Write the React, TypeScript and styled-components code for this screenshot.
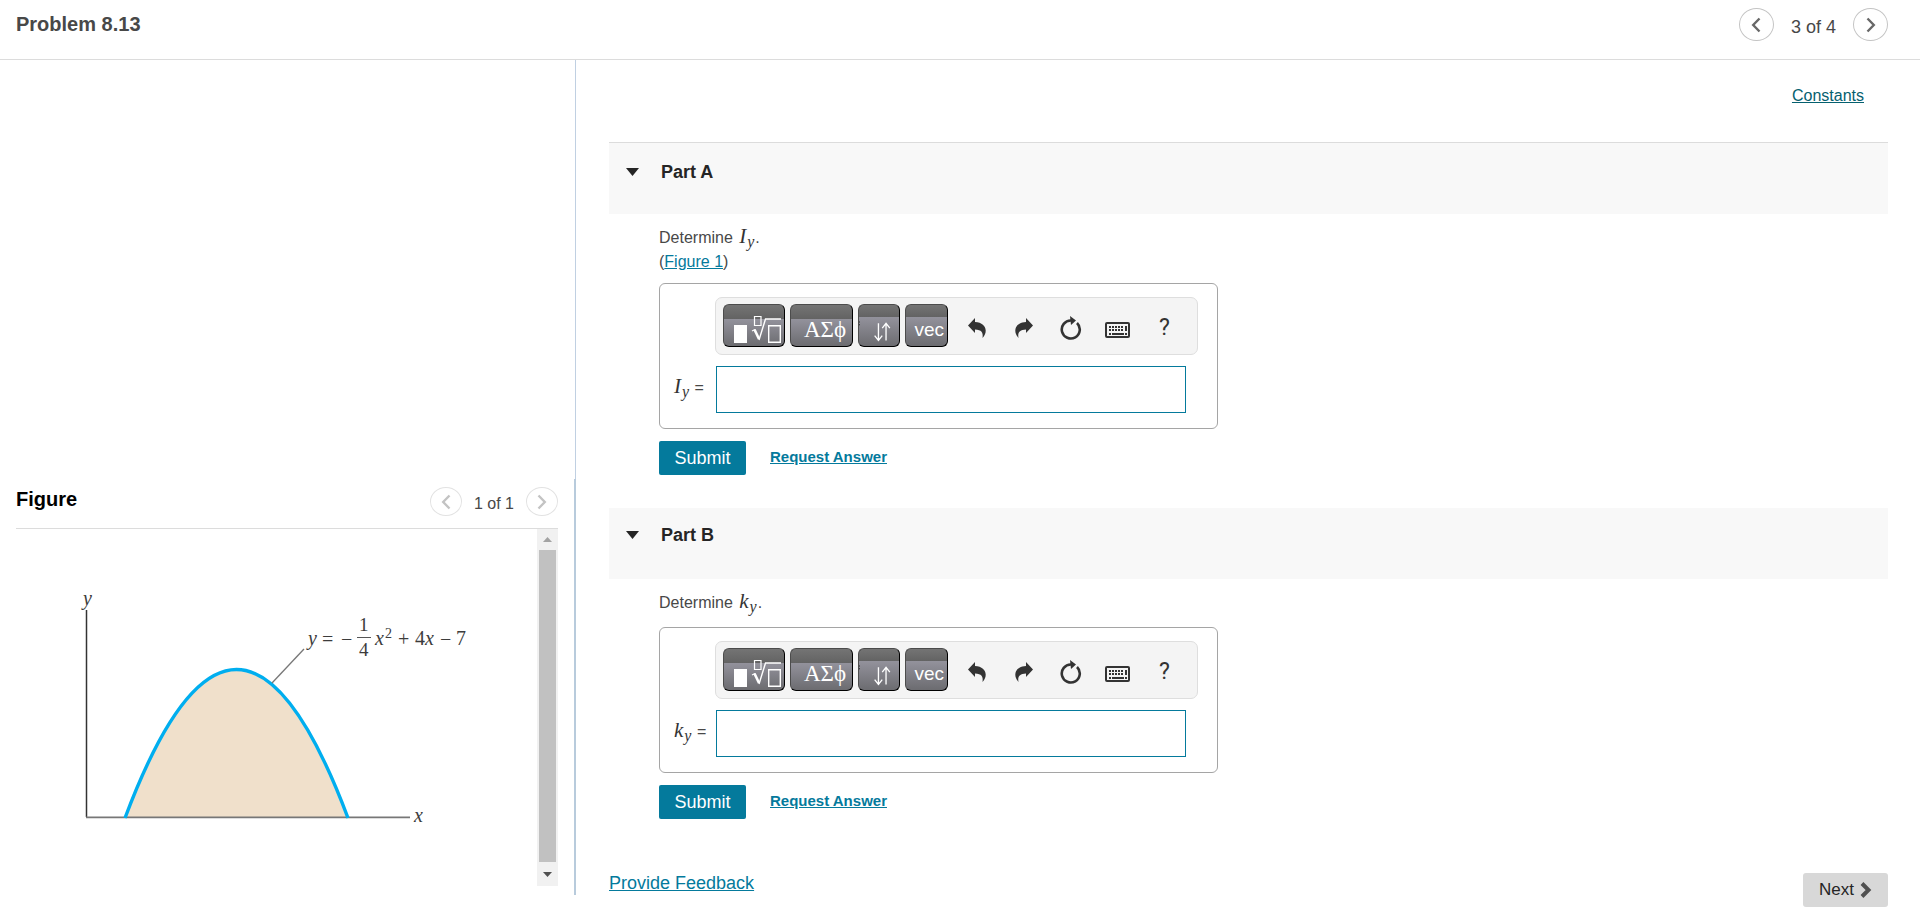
import React from 'react';
import styled, { createGlobalStyle } from 'styled-components';

const teal = '#047a9c';

const GlobalStyle = createGlobalStyle`
  *, *::before, *::after { box-sizing: border-box; }
  body {
    margin: 0;
    background: #fff;
    color: #484848;
    font: 16px/24px "Liberation Sans", Arial, sans-serif;
  }
  button, input { font: inherit; }
`;

const Page = styled.div`
  display: flex;
  flex-direction: column;
  min-height: 100vh;
`;

const Header = styled.header`
  display: flex;
  align-items: flex-start;
  justify-content: space-between;
  height: 60px;
  padding: 8px 32px 0 16px;
  border-bottom: 1px solid #dcdcdc;
`;

const Title = styled.h1`
  margin: 0;
  padding-top: 4px;
  font-size: 20px;
  line-height: 24px;
  color: #484848;
`;

const Pager = styled.nav<{ $gap: number }>`
  display: flex;
  align-items: center;
  gap: ${(p) => p.$gap}px;
`;

const PagerText = styled.span<{ $size: number }>`
  padding-top: 4px;
  font-size: ${(p) => p.$size}px;
  line-height: 24px;
`;

const RoundButton = styled.button<{ $small?: boolean }>`
  display: grid;
  place-items: center;
  width: ${(p) => (p.$small ? 32 : 35)}px;
  height: ${(p) => (p.$small ? 29 : 33)}px;
  padding: 0;
  border: 1px solid ${(p) => (p.$small ? '#e2e2e2' : '#c4c4c4')};
  border-radius: 50%;
  background: #fff;
  color: ${(p) => (p.$small ? '#c3c3c3' : '#686868')};
`;

const Body = styled.div`
  display: flex;
  flex: 1;
`;

const Side = styled.aside`
  display: flex;
  flex-direction: column;
  align-items: stretch;
  width: 30%;
  margin-bottom: 15px;
`;

const SideTop = styled.div`
  flex: 1;
  border-right: 1px solid #c0d0e2;
`;

const FigurePanel = styled.section`
  padding: 8px 16px 9px;
  border-right: 2px solid #b8cbdc;
`;

const FigureHead = styled.div`
  display: flex;
  align-items: flex-start;
  justify-content: space-between;
  height: 42px;
  border-bottom: 1px solid #dcdcdc;
`;

const FigureTitle = styled.h2`
  margin: 0;
  font-size: 20px;
  line-height: 24px;
  color: #000;
`;

const FigureBody = styled.div`
  display: flex;
  justify-content: space-between;
  height: 357px;
`;

const Scrollbar = styled.div`
  display: flex;
  flex-direction: column;
  align-items: center;
  width: 21px;
  background: #f1f1f1;
`;

const ScrollArrow = styled.div<{ $size: number }>`
  display: grid;
  place-items: center;
  height: ${(p) => p.$size}px;
`;

const ScrollThumb = styled.div`
  flex: 1;
  width: 17px;
  background: #c1c1c1;
`;

const Main = styled.main`
  display: flex;
  flex: 1;
  flex-direction: column;
  padding: 24px 32px 3px 33px;
`;

const Link = styled.a<{ $color?: string }>`
  color: ${(p) => p.$color ?? teal};
  text-decoration: underline;
`;

const TopLinks = styled.div`
  display: flex;
  justify-content: flex-end;
  height: 58px;
  padding-right: 24px;
`;

const PartHead = styled.h2<{ $first?: boolean }>`
  display: flex;
  align-items: flex-start;
  gap: 22px;
  height: ${(p) => (p.$first ? 72 : 71)}px;
  margin: 0;
  padding: ${(p) => (p.$first ? 17 : 15)}px 17px 0;
  border-top: ${(p) => (p.$first ? '1px solid #dcdcdc' : '0')};
  background: #f8f8f8;
  font-size: 18px;
  line-height: 24px;
  color: #252525;
  svg { margin-top: 8px; }
`;

const PartBody = styled.div`
  display: flex;
  flex-direction: column;
  align-items: flex-start;
  padding: 12px 0 33px 50px;
`;

const Prompt = styled.p<{ $tight?: boolean }>`
  margin: 0 0 ${(p) => (p.$tight ? 9 : 12)}px;
`;

const MathText = styled.i<{ $inline?: boolean }>`
  margin-left: ${(p) => (p.$inline ? 2 : 0)}px;
  font-family: "Liberation Serif", "Times New Roman", serif;
  font-size: 21px;
  line-height: 20px;
  color: #333;
  sub {
    margin: 0 1px;
    font-size: 16px;
    line-height: 1px;
    vertical-align: -4px;
  }
`;

const AnswerBox = styled.div`
  display: grid;
  grid-template-columns: 55px auto;
  row-gap: 11px;
  padding: 13px 19px 15px 0;
  border: 1px solid #a5a5a5;
  border-radius: 6px;
`;

const Toolbar = styled.div`
  display: flex;
  grid-column: 2;
  gap: 5px;
  width: 483px;
  height: 58px;
  padding: 6px 7px;
  border: 1px solid #dedede;
  border-radius: 7px;
  background: #f4f4f4;
`;

const KeyButton = styled.button<{ $width: number; $band: number; $serif?: boolean }>`
  display: flex;
  align-items: flex-end;
  justify-content: flex-end;
  width: ${(p) => p.$width}px;
  height: 43px;
  padding: 0 ${(p) => (p.$serif ? 6 : 3)}px 2px 0;
  border: 1px solid #000;
  border-top-color: #4c4c4c;
  border-left-color: #4c4c4c;
  border-radius: 6px;
  background: linear-gradient(
    #747474 0,
    #636363 ${(p) => p.$band}px,
    #93929c ${(p) => p.$band}px,
    #6c6c70 100%
  );
  color: #fff;
  font-family: ${(p) => (p.$serif ? '"Liberation Serif", serif' : '"Liberation Sans", sans-serif')};
  font-size: ${(p) => (p.$serif ? 23 : 19)}px;
  line-height: 28px;
`;

const IconGroup = styled.div`
  display: flex;
`;

const IconButton = styled.button<{ $drop?: number }>`
  display: grid;
  place-items: center;
  width: 47px;
  height: 43px;
  padding: ${(p) => p.$drop ?? 4}px 0 0;
  border: 0;
  background: none;
  color: #333;
`;

const HelpMark = styled.span`
  font-family: Roboto, sans-serif;
  font-size: 23px;
  line-height: 24px;
`;

const FieldLabel = styled.label`
  align-self: center;
  padding-left: 14px;
  padding-bottom: 4px;
  white-space: nowrap;
`;

const AnswerInput = styled.input`
  width: 470px;
  height: 47px;
  margin-left: 1px;
  padding: 0 12px;
  border: 1px solid ${teal};
  border-radius: 0;
  outline: 0;
  background: #fff;
`;

const Actions = styled.div`
  display: flex;
  align-items: center;
  gap: 24px;
  margin-top: 12px;
`;

const SubmitButton = styled.button`
  width: 87px;
  height: 34px;
  padding: 0;
  border: 0;
  border-radius: 2px;
  background: ${teal};
  color: #fff;
  font-size: 18px;
  line-height: 24px;
`;

const RequestLink = styled(Link)`
  padding-bottom: 2px;
  font-size: 15px;
  font-weight: bold;
  line-height: 20px;
`;

const Footer = styled.footer`
  display: flex;
  align-items: flex-start;
  justify-content: space-between;
  margin-top: auto;
  font-size: 18px;
  line-height: 24px;
`;

const NextButton = styled.button`
  display: flex;
  align-items: center;
  justify-content: center;
  gap: 6px;
  width: 85px;
  height: 34px;
  margin-top: 2px;
  padding: 0;
  border: 0;
  border-radius: 3px;
  background: #d8d8d8;
  color: #252525;
  font-size: 17px;
`;

const Chevron = ({ back, bold }: { back?: boolean; bold?: boolean }) => (
  <svg width={bold ? 12 : 10} height="16" viewBox={bold ? '0 0 12 16' : '0 0 10 16'} fill="none" stroke={bold ? '#505050' : 'currentColor'} strokeWidth={bold ? 4 : 2.4}>
    <path d={bold ? 'M2 1.5l6.5 6.5L2 14.5' : back ? 'M8.5 1.5L2.2 8l6.3 6.5' : 'M1.5 1.5L7.8 8l-6.3 6.5'} />
  </svg>
);

const Triangle = ({ up, width, height, fill }: { up?: boolean; width: number; height: number; fill: string }) => (
  <svg width={width} height={height} viewBox="0 0 10 10" preserveAspectRatio="none" fill={fill}>
    <path d={up ? 'M0 10L5 0l5 10z' : 'M0 0h10L5 10z'} />
  </svg>
);

const TemplatesIcon = () => (
  <svg width="48" height="29" viewBox="0 0 48 29" fill="none" stroke="#fff">
    <path d="M1 10h13v18H1z" fill="#fff" stroke="none" />
    <path d="M21.5 1.5h6.5v9h-6.5z" strokeWidth="1.2" />
    <path d="M19 16l3-1.5" strokeWidth="1.2" />
    <path d="M21.5 14.5l4.5 9.5" strokeWidth="2.6" />
    <path d="M26 25L32.500 4H48" strokeWidth="1.4" />
    <path d="M35.700 10.700h11.6v16.6H35.700z" strokeWidth="1.4" />
  </svg>
);

const UpDownIcon = () => (
  <svg width="39" height="29" viewBox="0 0 39 29" fill="none" stroke="#fff" strokeWidth="1.4">
    <path d="M20.5 8v17M16.5 21l4 5 4-5M28.5 26V9M24.5 13l4-5 4 5" />
    <path d="M0 6h1v1H0zM0 9h1v1H0z" fill="#222" stroke="none" />
  </svg>
);

const UndoIcon = ({ flip }: { flip?: boolean }) => (
  <svg width="18" height="20" viewBox="0 0 18 20" fill="currentColor">
    <path
      transform={flip ? 'matrix(-1 0 0 1 18 0)' : undefined}
      d="M0 7.5L7 0v4c7 .3 10.500 4 10.700 8.500.1 2.700-1 5-3.200 7.500 1-5.500-1-8.200-7.500-8.500V15z"
    />
  </svg>
);

const ResetIcon = () => (
  <svg width="22" height="24" viewBox="0 0 22 24">
    <path d="M17 7A9 9 0 1 1 11 4.500" fill="none" stroke="currentColor" strokeWidth="2.6" />
    <path d="M10 0l6 4.500-5 4.500z" fill="currentColor" />
  </svg>
);

const KeyboardIcon = () => (
  <svg width="25" height="16" viewBox="0 0 25 16" fill="none" stroke="currentColor" strokeWidth="2">
    <rect x="1" y="1" width="23" height="14" rx="1" />
    <path d="M4 5h14M4 8h15M4 12h2M20 12h2" strokeDasharray="2 1" />
    <path d="M7 12h12M21 4v5" />
  </svg>
);

const ParabolaFigure = () => (
  <svg width="480" height="300" viewBox="16 529 480 300" role="img" aria-label="Region under a parabola" fontFamily="'Liberation Serif', serif" fontSize="20" fill="#3c3c3c">
    <path d="M125 817Q236.500 522 348 817z" fill="#f0e0cb" />
    <path d="M86.500 610V817" stroke="#333" strokeWidth="1.5" />
    <path d="M86 817.300H410" stroke="#777" strokeWidth="1.7" />
    <path d="M125 818Q236.500 521 348 818" fill="none" stroke="#00aeef" strokeWidth="3.4" />
    <path d="M272 683l32-34" stroke="#777" strokeWidth="1.3" />
    <text x="83" y="605" fontStyle="italic">y</text>
    <text x="414" y="822" fontStyle="italic">x</text>
    <text x="308" y="645" fontStyle="italic">y</text>
    <text x="322" y="646">=</text>
    <text x="341" y="646">−</text>
    <text x="359" y="631" fontSize="19">1</text>
    <path d="M357 637.500h14" stroke="#555" strokeWidth="1" />
    <text x="359" y="656" fontSize="19">4</text>
    <text x="375" y="645" fontStyle="italic">x</text>
    <text x="385" y="638" fontSize="14">2</text>
    <text x="398" y="646">+</text>
    <text x="415" y="645">4</text>
    <text x="425" y="645" fontStyle="italic">x</text>
    <text x="440" y="646">−</text>
    <text x="456" y="645">7</text>
  </svg>
);

interface PartProps {
  id: string;
  title: string;
  symbol: string;
  first?: boolean;
}

const Part = ({ id, title, symbol, first }: PartProps) => (
  <section>
    <PartHead $first={first}>
      <Triangle width={13} height={8} fill="#252525" />
      {title}
    </PartHead>
    <PartBody>
      <Prompt $tight={first}>
        Determine <MathText $inline>{symbol}<sub>y</sub></MathText>.
        {first && (
          <>
            <br />
            (<Link href="#figure">Figure 1</Link>)
          </>
        )}
      </Prompt>
      <AnswerBox>
        <Toolbar>
          <KeyButton type="button" $width={62} $band={14} aria-label="Templates">
            <TemplatesIcon />
          </KeyButton>
          <KeyButton type="button" $width={63} $band={14} $serif>ΑΣϕ</KeyButton>
          <KeyButton type="button" $width={42} $band={12} aria-label="Arrows">
            <UpDownIcon />
          </KeyButton>
          <KeyButton type="button" $width={43} $band={12}>vec</KeyButton>
          <IconGroup>
            <IconButton type="button" aria-label="Undo"><UndoIcon /></IconButton>
            <IconButton type="button" aria-label="Redo"><UndoIcon flip /></IconButton>
            <IconButton type="button" aria-label="Reset"><ResetIcon /></IconButton>
            <IconButton type="button" $drop={8} aria-label="Keyboard shortcuts"><KeyboardIcon /></IconButton>
            <IconButton type="button" aria-label="Help"><HelpMark>?</HelpMark></IconButton>
          </IconGroup>
        </Toolbar>
        <FieldLabel htmlFor={id}><MathText>{symbol}<sub>y</sub></MathText> =</FieldLabel>
        <AnswerInput id={id} type="text" />
      </AnswerBox>
      <Actions>
        <SubmitButton type="button">Submit</SubmitButton>
        <RequestLink href="#answer">Request Answer</RequestLink>
      </Actions>
    </PartBody>
  </section>
);

export default function App() {
  return (
    <Page>
      <GlobalStyle />
      <Header>
        <Title>Problem 8.13</Title>
        <Pager $gap={17} aria-label="Problems">
          <RoundButton type="button" aria-label="Previous problem"><Chevron back /></RoundButton>
          <PagerText $size={18}>3 of 4</PagerText>
          <RoundButton type="button" aria-label="Next problem"><Chevron /></RoundButton>
        </Pager>
      </Header>
      <Body>
        <Side>
          <SideTop />
          <FigurePanel id="figure">
            <FigureHead>
              <FigureTitle>Figure</FigureTitle>
              <Pager $gap={12} aria-label="Figures">
                <RoundButton type="button" $small aria-label="Previous figure"><Chevron back /></RoundButton>
                <PagerText $size={16}>1 of 1</PagerText>
                <RoundButton type="button" $small aria-label="Next figure"><Chevron /></RoundButton>
              </Pager>
            </FigureHead>
            <FigureBody>
              <ParabolaFigure />
              <Scrollbar>
                <ScrollArrow $size={21}><Triangle up width={9} height={5} fill="#a3a3a3" /></ScrollArrow>
                <ScrollThumb />
                <ScrollArrow $size={24}><Triangle width={9} height={5} fill="#505050" /></ScrollArrow>
              </Scrollbar>
            </FigureBody>
          </FigurePanel>
        </Side>
        <Main>
          <TopLinks>
            <Link href="#constants" $color="#05606f">Constants</Link>
          </TopLinks>
          <Part id="answer-a" title="Part A" symbol="I" first />
          <Part id="answer-b" title="Part B" symbol="k" />
          <Footer>
            <Link href="#feedback">Provide Feedback</Link>
            <NextButton type="button">Next<Chevron bold /></NextButton>
          </Footer>
        </Main>
      </Body>
    </Page>
  );
}
